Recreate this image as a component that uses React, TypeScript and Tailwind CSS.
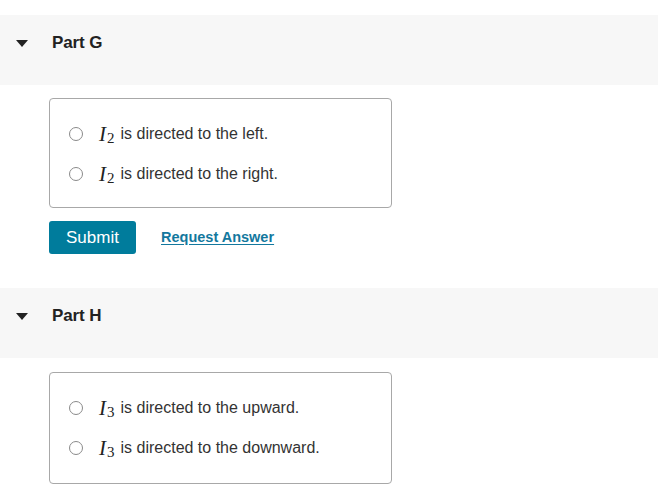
import type { ReactNode } from "react";

type Choice = { sub: string; text: string };

const parts: { label: string; choices: Choice[]; actions: boolean }[] = [
  {
    label: "Part G",
    choices: [
      { sub: "2", text: "is directed to the left." },
      { sub: "2", text: "is directed to the right." },
    ],
    actions: true,
  },
  {
    label: "Part H",
    choices: [
      { sub: "3", text: "is directed to the upward." },
      { sub: "3", text: "is directed to the downward." },
    ],
    actions: false,
  },
];

function PartHeader({ label }: { label: string }) {
  return (
    <div className="flex h-[70px] items-start bg-[#f7f7f7] pt-[16px]">
      <svg width="12" height="7" viewBox="0 0 12 7" className="ml-[16px] mt-[9px] shrink-0">
        <path d="M0 0 H12 L6 7 Z" fill="#222" />
      </svg>
      <span className="ml-[24px] text-[17px] font-bold leading-[24px] tracking-[-0.1px] text-[#222]">
        {label}
      </span>
    </div>
  );
}

function MathI({ sub }: { sub: string }) {
  return (
    <span className="mr-[6px] inline-flex items-baseline font-['Liberation_Serif',serif] text-[#222]">
      <span className="text-[21px] italic leading-none">I</span>
      <span className="ml-[1px] translate-y-[2px] text-[15px] leading-none">{sub}</span>
    </span>
  );
}

function Radio({ children }: { children: ReactNode }) {
  return (
    <label className="flex h-[24px] items-center">
      <span className="h-[14px] w-[14px] shrink-0 rounded-full border border-[#8a8a8a] bg-white" />
      <span className="ml-[16px] flex items-center text-[16px] text-[#333]">{children}</span>
    </label>
  );
}

export default function App() {
  return (
    <div className="min-h-[485px] bg-white pt-[15px] font-['Liberation_Sans',Arial,sans-serif]">
      {parts.map((p, i) => (
        <section key={p.label} className={i > 0 ? "mt-[34px]" : ""}>
          <PartHeader label={p.label} />
          <div
            className={
              "ml-[49px] flex w-[343px] flex-col gap-[16px] rounded-[4px] border border-[#a8a8a8] px-[19px] pt-[23px] " +
              (i > 0 ? "mt-[14px] h-[112px]" : "mt-[13px] h-[110px]")
            }
          >
            {p.choices.map((c) => (
              <Radio key={c.text}>
                <MathI sub={c.sub} />
                {c.text}
              </Radio>
            ))}
          </div>
          {p.actions && (
            <div className="ml-[49px] mt-[13px] flex items-center">
              <button
                type="button"
                className="h-[33px] w-[87px] rounded-[3px] bg-[#007c9c] text-[17px] text-white"
              >
                Submit
              </button>
              <a
                href="#"
                className="ml-[25px] text-[14.5px] font-bold text-[#13789e] underline underline-offset-[2px]"
              >
                Request Answer
              </a>
            </div>
          )}
        </section>
      ))}
    </div>
  );
}
